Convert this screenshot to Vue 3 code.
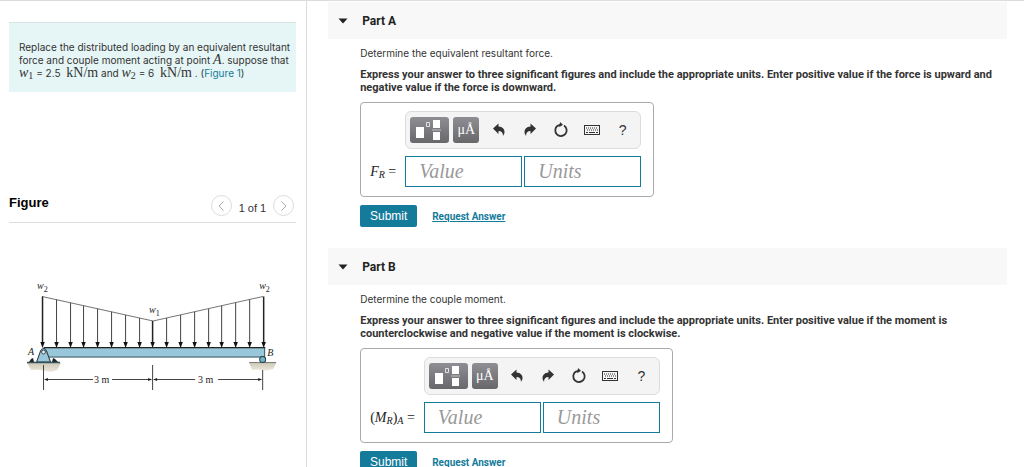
<template>
  <div class="page">
    <aside class="sidebar">
      <div class="problem">
        <p>
          Replace the distributed loading by an equivalent resultant
          force and couple moment acting at point <var>A</var>. suppose that
          <var>w<sub>1</sub></var> = 2.5 <span class="unit">kN/m</span> and
          <var>w<sub>2</sub></var> = 6 <span class="unit">kN/m</span> .
          (<a href="#figure">Figure 1</a>)
        </p>
      </div>

      <div class="figure-header">
        <h2>Figure</h2>
        <div class="pager">
          <button type="button" class="pager-btn" aria-label="Previous figure">
            <svg width="8" height="12" viewBox="0 0 8 12"><path d="M6.500 1.500L2 6l4.500 4.500" /></svg>
          </button>
          <span>1 of 1</span>
          <button type="button" class="pager-btn" aria-label="Next figure">
            <svg width="8" height="12" viewBox="0 0 8 12"><path d="M1.500 1.500L6 6l-4.500 4.500" /></svg>
          </button>
        </div>
      </div>

      <svg id="figure" class="beam" viewBox="0 0 287 120" role="img" aria-label="Beam AB with distributed load">
        <defs>
          <linearGradient id="ground" x1="0" y1="0" x2="0" y2="1">
            <stop offset="0" stop-color="#cfcab8" />
            <stop offset="1" stop-color="#ebe8dc" />
          </linearGradient>
        </defs>

        <path d="M33 20.500L144 45L254 20.500" class="load-line" />
        <g v-for="arrow in arrows" :key="arrow.x">
          <line :x1="arrow.x" :y1="arrow.y" :x2="arrow.x" y2="67" :class="arrow.edge ? 'shaft edge' : 'shaft'" />
          <path :d="`M${arrow.x - 2.2} 66h4.4l-2.2 6z`" class="head" />
        </g>

        <rect x="35" y="71.500" width="220.500" height="9.500" fill="#98c7da" stroke="#35525f" />
        <path d="M35 71.500h221" stroke="#222" stroke-width="1.200" />

        <path d="M18 87h34l-4 7q-5 3-12 1t-14-1z" fill="url(#ground)" />
        <path d="M20 86l2-3 2-1 1 4zM43 86l1-4 2 1 3 3z" fill="#222" />
        <path d="M27.500 86l4-11q3-5 6 0l4 11z" fill="#9ac8da" stroke="#263b44" />
        <path d="M18 86.500h33" stroke="#35525f" stroke-width="1.500" />
        <circle cx="34.500" cy="76" r="2" fill="#d8e8ee" stroke="#333" stroke-width="0.800" />

        <path d="M240 87h27l-3 6q-6 2-11 1t-10 0z" fill="url(#ground)" />
        <path d="M240 86.500h27" stroke="#777" />
        <circle cx="253.500" cy="83.500" r="3" fill="#72b5cd" stroke="#263b44" />

        <path d="M34.500 89v25M143.500 89v25M253.500 94v20" class="dim" />
        <path d="M36 103.500h48M103 103.500h39M145 103.500h41M209 103.500h43" class="dim" />
        <path d="M35 103.500l4-1.500v3zM143 103.500l-4-1.500v3zM144 103.500l4-1.500v3zM253 103.500l-4-1.500v3z" fill="#222" />

        <text x="28" y="13" class="load-name">w<tspan class="index" dy="3">2</tspan></text>
        <text x="140" y="37" class="load-name">w<tspan class="index" dy="3">1</tspan></text>
        <text x="250" y="13" class="load-name">w<tspan class="index" dy="3">2</tspan></text>
        <text x="19" y="79" class="point">A</text>
        <text x="258" y="80" class="point">B</text>
        <text x="85" y="107" class="length">3 m</text>
        <text x="189" y="107" class="length">3 m</text>
      </svg>
    </aside>

    <main class="content">
      <section v-for="part in parts" :key="part.id" class="part">
        <button type="button" class="part-header">
          <svg width="10" height="6" viewBox="0 0 10 6"><path d="M0.500 0.500h9L5 5.500z" fill="#222" /></svg>
          <span>Part {{ part.id }}</span>
        </button>

        <div class="part-body">
          <p class="question">{{ part.question }}</p>
          <p class="instructions">{{ part.instructions }}</p>

          <div class="answer">
            <div class="toolbar">
              <button type="button" class="tool dark wide" aria-label="Templates">
                <svg width="39" height="26" viewBox="0 0 39 26">
                  <path d="M6 10h8v11H6zM23 3h7v8h-7zM23 15h7v8h-7z" fill="#fff" />
                  <path d="M16.500 5.500h3v4h-3z" fill="none" stroke="#e4e4e6" />
                  <path d="M22 13h9" stroke="#c4c4c7" />
                </svg>
              </button>
              <button type="button" class="tool dark" aria-label="Symbols">μÅ</button>
              <button type="button" class="tool icon" aria-label="Undo">
                <svg width="14" height="14" viewBox="0 0 14 14">
                  <path d="M1 5.500L6.500 0.500v3q6.500 0.500 6 6.500l-1.500 3q0-5-4.500-5v3z" fill="#333" />
                </svg>
              </button>
              <button type="button" class="tool icon" aria-label="Redo">
                <svg width="14" height="14" viewBox="0 0 14 14">
                  <path d="M13 5.500L7.500 0.500v3q-6.500 0.500-6 6.500l1.500 3q0-5 4.500-5v3z" fill="#333" />
                </svg>
              </button>
              <button type="button" class="tool icon" aria-label="Reset">
                <svg width="16" height="16" viewBox="0 0 16 16">
                  <path d="M11 3.500a5.700 5.700 0 1 1-6.500 0.300L8 2.500" fill="none" stroke="#333" stroke-width="1.800" />
                  <path d="M7 0l3 2.700-3.800 2.600z" fill="#333" />
                </svg>
              </button>
              <button type="button" class="tool icon" aria-label="Keyboard shortcuts">
                <svg width="16" height="10" viewBox="0 0 16 10" fill="none" stroke="#333">
                  <rect x="0.500" y="0.500" width="15" height="9" />
                  <path d="M2 3h12M3 5h11" stroke-dasharray="1 1" />
                  <path d="M2 7.500h2M5 7.500h6M12 7.500h2" />
                </svg>
              </button>
              <button type="button" class="tool icon help" aria-label="Help">?</button>
            </div>

            <label :for="`value-${part.id}`" class="symbol">
              <template v-if="part.id === 'A'"><var>F<sub>R</sub></var></template>
              <template v-else>(<var>M<sub>R</sub></var>)<var><sub>A</sub></var></template>
              =
            </label>
            <div class="fields">
              <input :id="`value-${part.id}`" v-model="part.value" type="text" placeholder="Value" />
              <input v-model="part.units" type="text" placeholder="Units" aria-label="Units" />
            </div>
          </div>

          <div class="actions">
            <button type="button" class="submit">Submit</button>
            <a href="#request">Request Answer</a>
          </div>
        </div>
      </section>
    </main>
  </div>
</template>

<script setup>
import { reactive } from "vue";

const parts = reactive([
  {
    id: "A",
    question: "Determine the equivalent resultant force.",
    instructions:
      "Express your answer to three significant figures and include the appropriate units. Enter positive value if the force is upward and negative value if the force is downward.",
    value: "",
    units: "",
  },
  {
    id: "B",
    question: "Determine the couple moment.",
    instructions:
      "Express your answer to three significant figures and include the appropriate units. Enter positive value if the moment is counterclockwise and negative value if the moment is clockwise.",
    value: "",
    units: "",
  },
]);

// load arrows, highest at both ends and lowest at midspan
const arrows = Array.from({ length: 17 }, (_, i) => ({
  x: 33.5 + Math.round(i * 13.8),
  y: 45 - (Math.abs(8 - i) * 24.5) / 8,
  edge: i === 0 || i === 8 || i === 16,
}));
</script>

<style>
body {
  background: #fff;
}
</style>

<style scoped>
.page {
  display: flex;
  min-height: 100vh;
  box-sizing: border-box;
  border-top: 1px solid #dcdcdc;
  font-family: Inter, "Liberation Sans", Arial, sans-serif;
  font-size: 10px;
  line-height: 13px;
  color: #333;
}

p,
h2 {
  margin: 0;
}

button {
  font-family: inherit;
  padding: 0;
  border: none;
  cursor: pointer;
}

a {
  color: #147b9b;
}

.sidebar {
  flex: 0 0 30%;
  box-sizing: border-box;
  padding: 21px 10px 0 9px;
  border-right: 1px solid #d3dde6;
}

.problem {
  padding: 18px 4px 12px 10px;
  background: #e6f6f6;
  border-top: 1px solid #dbe3e4;
}

.problem a {
  text-decoration: none;
}

.problem var,
.unit {
  font-family: "Liberation Serif", "Times New Roman", serif;
  font-size: 14px;
  line-height: 1px;
}

.unit {
  margin-left: 3px;
}

sub {
  font-size: 10px;
  line-height: 0;
  vertical-align: -2px;
}

.problem sub {
  font-style: normal;
}

.figure-header {
  display: flex;
  align-items: flex-end;
  justify-content: space-between;
  margin-top: 103px;
  padding-bottom: 6px;
  border-bottom: 1px solid #dcdcdc;
}

h2 {
  align-self: flex-start;
  font-family: "Liberation Sans", Arial, sans-serif;
  font-size: 13px;
  line-height: 16px;
  color: #000;
}

.pager {
  display: flex;
  align-items: flex-end;
  gap: 7px;
  padding-right: 2px;
  font-family: "Liberation Sans", Arial, sans-serif;
  font-size: 11px;
  line-height: 16px;
}

.pager-btn {
  display: flex;
  align-items: center;
  justify-content: center;
  width: 21px;
  height: 21px;
  border: 1px solid #dcdcdc;
  border-radius: 50%;
  background: #fff;
}

.pager-btn path {
  fill: none;
  stroke: #aaa;
}

.beam {
  display: block;
  width: 100%;
  margin-top: 53px;
  font-family: "Liberation Serif", "Times New Roman", serif;
  fill: #222;
}

.load-line {
  fill: none;
  stroke: #777;
}

.shaft {
  stroke: #444;
}

.edge {
  stroke: #222;
  stroke-width: 1.500;
}

.head {
  fill: #111;
}

.dim {
  stroke: #444;
}

.load-name {
  font-size: 10px;
  font-style: italic;
}

.index {
  font-size: 8px;
  font-style: normal;
}

.point {
  font-size: 10px;
  font-style: italic;
}

.length {
  font-size: 10px;
}

.content {
  flex: 1;
  min-width: 0;
  padding: 1px 17px 0 21px;
}

.part {
  margin-bottom: 21px;
}

.part-header {
  display: flex;
  align-items: center;
  gap: 14px;
  width: 100%;
  height: 37px;
  padding-left: 10px;
  background: #f8f8f8;
  font-family: Roboto, "Liberation Sans", Arial, sans-serif;
  font-size: 12px;
  font-weight: bold;
  color: #222;
}

.part-body {
  padding: 8px 0 0 32px;
}

.instructions {
  margin-top: 8px;
  font-family: Roboto, "Liberation Sans", Arial, sans-serif;
  font-size: 11px;
  font-weight: bold;
}

.answer {
  display: inline-grid;
  grid-template-columns: auto auto;
  align-items: center;
  column-gap: 9px;
  row-gap: 7px;
  margin-top: 8px;
  padding: 8px 12px 9px 9px;
  border: 1px solid #aaa;
  border-radius: 4px;
}

.toolbar {
  grid-column: 2;
  display: flex;
  align-items: center;
  box-sizing: border-box;
  height: 38px;
  padding-left: 4px;
  background: #f4f4f4;
  border: 1px solid #dcdcdc;
  border-radius: 6px;
}

.tool {
  display: flex;
  align-items: center;
  justify-content: center;
  height: 26px;
}

.dark {
  width: 26px;
  margin-right: 4px;
  border-radius: 3px;
  background: linear-gradient(#8e8e94, #68686b);
  color: #fff;
  font-family: "Liberation Serif", "Times New Roman", serif;
  font-size: 14px;
}

.wide {
  width: 39px;
}

.icon {
  width: 31px;
  background: none;
}

.help {
  font-family: "Liberation Sans", Arial, sans-serif;
  font-size: 14px;
  color: #333;
}

.symbol {
  font-family: "Liberation Serif", "Times New Roman", serif;
  font-size: 14px;
  color: #222;
  white-space: nowrap;
}

.fields {
  display: flex;
  gap: 2px;
}

input {
  box-sizing: border-box;
  width: 117px;
  height: 31px;
  padding: 0 13px;
  border: 1px solid #147b9b;
  border-radius: 0;
  background: #fff;
  font-family: "Liberation Serif", "Times New Roman", serif;
  font-size: 20px;
}

input::placeholder {
  font-style: italic;
  color: #999;
  opacity: 1;
}

.actions {
  display: flex;
  align-items: center;
  gap: 15px;
  margin-top: 8px;
  font-family: Roboto, "Liberation Sans", Arial, sans-serif;
  font-weight: bold;
}

.submit {
  width: 57px;
  height: 22px;
  border-radius: 2px;
  background: #147b9b;
  color: #fff;
  font-family: "Liberation Sans", Arial, sans-serif;
  font-size: 12px;
}
</style>
